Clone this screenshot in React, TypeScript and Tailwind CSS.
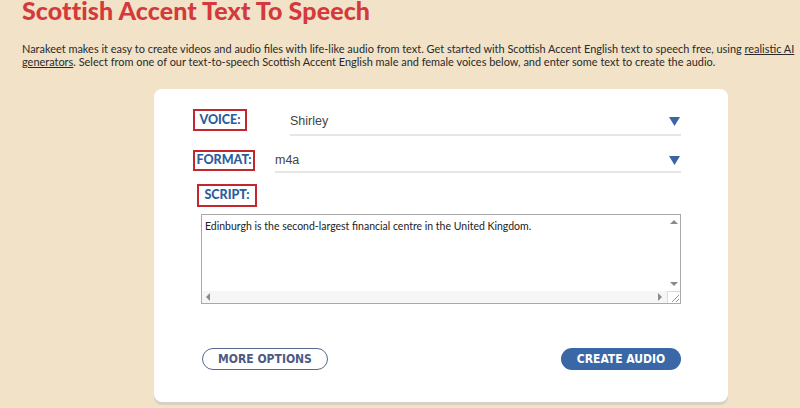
const Tri = ({ dir, className }: { dir: "up" | "down" | "left" | "right"; className?: string }) => {
  const pts = {
    up: "0,6 4,2 8,6",
    down: "0,2 4,6 8,2",
    left: "6,0 2,4 6,8",
    right: "2,0 6,4 2,8",
  }[dir];
  return (
    <svg width="8" height="8" viewBox="0 0 8 8" className={className}>
      <polygon points={pts} fill="#8a8a8a" />
    </svg>
  );
};

function Caret() {
  return (
    <svg width="11" height="9" viewBox="0 0 11 9" className="shrink-0">
      <polygon points="0,0 11,0 5.5,9" fill="#3b66a6" />
    </svg>
  );
}

function Label({ text, className }: { text: string; className?: string }) {
  return (
    <div
      className={`flex items-center justify-center border-2 border-[#c1272d] text-[12.5px] font-black text-[#2c5d9b] font-['Lato',sans-serif] shrink-0 ${className ?? ""}`}
    >
      {text}
    </div>
  );
}

export default function App() {
  return (
    <div className="h-[408px] w-[800px] overflow-hidden bg-[#f1e2c8]">
      <h1 className="mt-[-5px] pl-[22px] font-['Lato',sans-serif] text-[25px] font-black leading-[30px] tracking-[0.1px] text-[#d4393b] whitespace-nowrap">
        Scottish Accent Text To Speech
      </h1>

      <p className="mt-[17px] pl-[22px] font-['Lato',sans-serif] text-[10.95px] leading-[13px] text-[#2a2a2a] whitespace-nowrap">
        Narakeet makes it easy to create videos and audio files with life-like audio from text. Get started with Scottish Accent English text to speech free, using{" "}
        <span className="underline">realistic AI</span>
        <br />
        <span className="underline">generators</span>. Select from one of our text-to-speech Scottish Accent English male and female voices below, and enter some text to create the audio.
      </p>

      <div className="ml-[154px] mt-[21px] w-[574px] rounded-[8px] bg-white pl-[39px] pr-[47px] pt-[20px] pb-[32px] shadow-[0_3px_0_#d8d0c2]">
        <div className="flex">
          <Label text="VOICE:" className="h-[22px] w-[54px]" />
          <div className="ml-[43px] flex h-[27px] flex-1 items-center justify-between border-b-2 border-[#e6e6e6] pr-[1px]">
            <span className="font-['Liberation_Sans',sans-serif] text-[12.5px] text-[#444]">Shirley</span>
            <Caret />
          </div>
        </div>

        <div className="mt-[14px] flex">
          <Label text="FORMAT:" className="h-[21px] w-[62px]" />
          <div className="ml-[20px] flex h-[23px] flex-1 items-center justify-between border-b-2 border-[#e6e6e6] pr-[1px]">
            <span className="font-['Liberation_Sans',sans-serif] text-[12.5px] text-[#444]">m4a</span>
            <Caret />
          </div>
        </div>

        <Label text="SCRIPT:" className="ml-[4px] mt-[11px] h-[23px] w-[60px]" />

        <div className="ml-[8px] mt-[7px] flex h-[90px] flex-col border border-[#a9a9a9]">
          <div className="flex flex-1">
            <div className="flex-1 px-[3px] pt-[4px] font-['Lato',sans-serif] text-[10.5px] leading-[14px] text-[#222]">
              Edinburgh is the second-largest financial centre in the United Kingdom.
            </div>
            <div className="flex w-[13px] flex-col items-center justify-between py-[3px]">
              <Tri dir="up" />
              <Tri dir="down" />
            </div>
          </div>
          <div className="flex h-[12px] items-center bg-[#f6f6f6]">
            <Tri dir="left" className="ml-[2px]" />
            <div className="flex-1" />
            <Tri dir="right" className="mr-[3px]" />
            <div className="relative h-[12px] w-[13px] border-l border-t border-[#dcdcdc] bg-white">
              <svg width="12" height="12" viewBox="0 0 12 12" className="absolute right-0 bottom-0">
                <line x1="11" y1="4" x2="4" y2="11" stroke="#9a9a9a" strokeWidth="1" />
                <line x1="11" y1="8" x2="8" y2="11" stroke="#9a9a9a" strokeWidth="1" />
              </svg>
            </div>
          </div>
        </div>

        <div className="mt-[44px] flex items-center justify-between pl-[9px]">
          <button className="h-[22px] w-[126px] rounded-full border-[1.5px] border-[#57688f] font-['DejaVu_Sans_Condensed','DejaVu_Sans',sans-serif] text-[12px] font-bold text-[#4c5a82]">
            MORE OPTIONS
          </button>
          <button className="h-[22px] w-[120px] rounded-full bg-[#3a67a5] font-['DejaVu_Sans_Condensed','DejaVu_Sans',sans-serif] text-[12px] font-bold text-white">
            CREATE AUDIO
          </button>
        </div>
      </div>
    </div>
  );
}
